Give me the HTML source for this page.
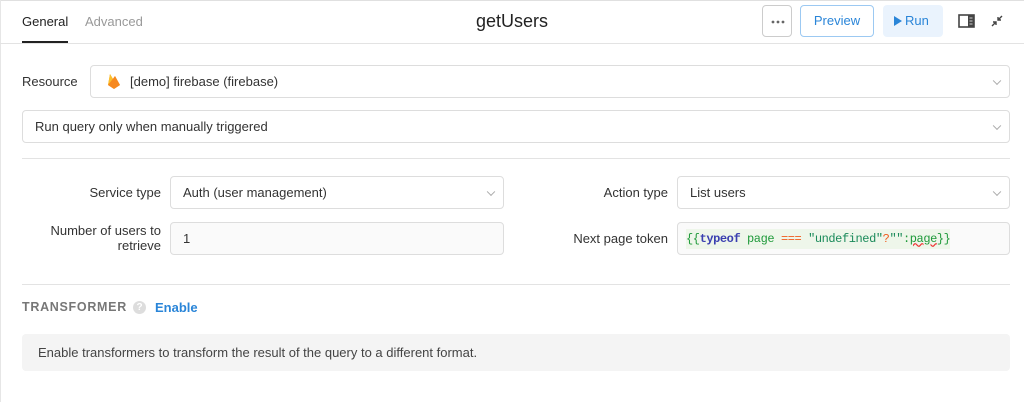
<!DOCTYPE html>
<html><head><meta charset="utf-8"><style>
*{box-sizing:border-box;margin:0;padding:0}
body{width:1024px;height:402px;background:#fff;font-family:"Liberation Sans",sans-serif;font-size:13px;color:#333;position:relative;overflow:hidden}
.a{position:absolute}
.box{position:absolute;border:1px solid #ddd;border-radius:4px;background:#fff;display:flex;align-items:center;padding-left:12px;font-size:13px;color:#333}
.chev{position:absolute;right:9px;top:50%;width:6px;height:6px;border-right:1px solid #aaa;border-bottom:1px solid #aaa;transform:translateY(-70%) rotate(45deg)}
.lbl{position:absolute;font-size:13px;color:#333;text-align:right}
.hr{position:absolute;left:22px;width:988px;height:1px;background:#e3e3e3}
</style></head><body>
<div class="a" style="left:0;top:0;width:1024px;height:1px;background:#e0e0e0"></div>
<div class="a" style="left:0;top:0;width:1px;height:402px;background:#e6e6e6"></div>
<div class="a" style="left:0;top:43px;width:1024px;height:1px;background:#e3e3e3"></div>
<div class="a" style="left:22px;top:14px;font-size:13px;color:#222">General</div>
<div class="a" style="left:22px;top:41px;width:46px;height:2px;background:#222"></div>
<div class="a" style="left:85px;top:14px;font-size:13px;color:#999">Advanced</div>
<div class="a" style="left:0;width:1024px;top:11px;text-align:center;font-size:18px;color:#222">getUsers</div>
<div class="a" style="left:762px;top:5px;width:30px;height:32px;border:1px solid #ccc;border-radius:4px"><svg class="a" style="left:8px;top:14px" width="14" height="4"><circle cx="2" cy="2" r="1.4" fill="#666"/><circle cx="7" cy="2" r="1.4" fill="#666"/><circle cx="12" cy="2" r="1.4" fill="#666"/></svg></div>
<div class="a" style="left:800px;top:5px;width:74px;height:32px;border:1px solid #9cc9f2;border-radius:4px;text-align:center;line-height:30px;color:#2a85d8;font-size:13px">Preview</div>
<div class="a" style="left:883px;top:5px;width:60px;height:32px;background:#eaf3fd;border-radius:4px;line-height:32px;color:#2a85d8;font-size:13px;padding-left:11px"><svg width="8" height="10" style="vertical-align:-1px;margin-right:3px"><path d="M0 0L8 5L0 10Z" fill="#2a85d8"/></svg>Run</div>
<svg class="a" style="left:958px;top:14px" width="18" height="14"><rect x="1" y="1" width="15" height="12" fill="none" stroke="#444" stroke-width="1.6"/><rect x="10" y="1" width="6" height="12" fill="#444"/><path d="M11.5 4h3M11.5 7h3M11.5 10h3" stroke="#fff" stroke-width="0.8"/></svg>
<svg class="a" style="left:990px;top:14px" width="14" height="14"><path d="M2 12L6 8M3 8h3v3M12 2L8 6M8 3v3h3" stroke="#444" stroke-width="1.4" fill="none"/></svg>

<div class="lbl" style="left:22px;top:74px">Resource</div>
<div class="box" style="left:90px;top:65px;width:920px;height:33px;padding-left:16px">
<svg width="14" height="17" style="margin-right:9px" viewBox="0 0 14 17"><path d="M1 12L3 1L6 6L8 3L13 12L7 16Z" fill="#f7a21b"/><path d="M1 12L3 1L6 6Z" fill="#fbc02d"/><path d="M1 12L8 3L13 12L7 16Z" fill="#f58220" opacity=".8"/></svg>[demo] firebase (firebase)<span class="chev"></span></div>
<div class="box" style="left:22px;top:110px;width:988px;height:33px">Run query only when manually triggered<span class="chev"></span></div>
<div class="hr" style="top:158px"></div>

<div class="lbl" style="left:0;width:161px;top:185px">Service type</div>
<div class="box" style="left:170px;top:176px;width:334px;height:33px">Auth (user management)<span class="chev"></span></div>
<div class="lbl" style="left:500px;width:168px;top:185px">Action type</div>
<div class="box" style="left:677px;top:176px;width:333px;height:33px">List users<span class="chev"></span></div>

<div class="lbl" style="left:0;width:161px;top:223px;line-height:15px">Number of users to<br>retrieve</div>
<div class="box" style="left:170px;top:222px;width:334px;height:33px;background:#fafafa">1</div>
<div class="lbl" style="left:500px;width:168px;top:231px">Next page token</div>
<div class="box" style="left:677px;top:222px;width:333px;height:33px;padding-left:8px;background:#fafafa">
<span style="font-family:'Liberation Mono',monospace;font-size:12px;letter-spacing:-0.42px;background:#eef6ea;padding:3px 0"><span style="color:#1f9a3a">{{</span><span style="color:#3a3fb0;font-weight:bold">typeof</span><span style="color:#1f9a3a"> page </span><span style="color:#f05a1c">===</span> <span style="color:#1a8a5a">"undefined"</span><span style="color:#f05a1c">?</span><span style="color:#1a8a5a">""</span><span style="color:#1f9a3a">:</span><span style="color:#1f9a3a;text-decoration:underline wavy #e33">page</span><span style="color:#1f9a3a">}}</span></span></div>

<div class="hr" style="top:284px"></div>
<div class="a" style="left:22px;top:300px;font-size:12.5px;font-weight:bold;color:#777;letter-spacing:0.7px">TRANSFORMER</div>
<div class="a" style="left:133px;top:301px;width:13px;height:13px;border-radius:50%;background:#ddd;color:#fff;font-size:10px;font-weight:bold;text-align:center;line-height:13px">?</div>
<div class="a" style="left:155px;top:300px;font-size:13px;font-weight:bold;color:#2a85d8">Enable</div>
<div class="a" style="left:22px;top:334px;width:988px;height:37px;background:#f4f4f4;border-radius:4px;padding-left:16px;line-height:37px;font-size:13px;color:#444">Enable transformers to transform the result of the query to a different format.</div>
</body></html>
